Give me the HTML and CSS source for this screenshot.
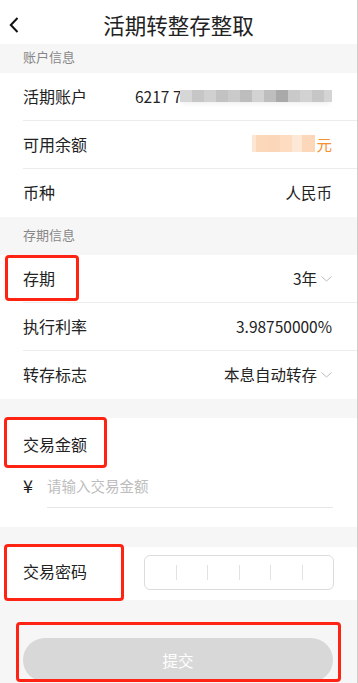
FILE: index.html
```html
<!DOCTYPE html>
<html lang="zh-CN">
<head>
  <meta charset="UTF-8">
  <meta name="viewport" content="width=device-width, initial-scale=1.0">
  <title>活期转整存整取</title>
  <link rel="stylesheet" href="styles.css">
</head>
<body>
  <div class="page">
    <header class="topbar">
      <svg class="back" width="10" height="16" viewBox="0 0 10 16">
        <path d="M8.5 1 L1.8 8 L8.5 15" fill="none" stroke="#111" stroke-width="2" />
      </svg>
      <h1>活期转整存整取</h1>
    </header>

    <div class="section-title first">账户信息</div>
    <div class="group">
      <div class="row">
        <span class="label">活期账户</span>
        <span class="account">6217 7<span class="blur-gray"></span></span>
      </div>
      <div class="row">
        <span class="label">可用余额</span>
        <span class="value orange"><span class="blur-orange"></span>元</span>
      </div>
      <div class="row">
        <span class="label">币种</span>
        <span class="value">人民币</span>
      </div>
    </div>

    <div class="section-title">存期信息</div>
    <div class="group">
      <div class="row">
        <span class="label">存期</span>
        <span class="value">3年<svg class="arrow" width="11" height="6" viewBox="0 0 11 6"><path d="M0.5 0.5 L5.5 5 L10.5 0.5" fill="none" stroke="#bbb" stroke-width="1" /></svg></span>
        <div class="mark mark-term"></div>
      </div>
      <div class="row">
        <span class="label">执行利率</span>
        <span class="value">3.98750000%</span>
      </div>
      <div class="row">
        <span class="label">转存标志</span>
        <span class="value">本息自动转存<svg class="arrow" width="11" height="6" viewBox="0 0 11 6"><path d="M0.5 0.5 L5.5 5 L10.5 0.5" fill="none" stroke="#bbb" stroke-width="1" /></svg></span>
      </div>
    </div>

    <div class="amount">
      <div class="amount-label">交易金额</div>
      <div class="amount-input">
        <span class="yen">¥</span>
        <input type="text" placeholder="请输入交易金额" />
      </div>
      <div class="mark mark-amount"></div>
    </div>

    <div class="password">
      <span class="label">交易密码</span>
      <div class="pwd-box">
        <span></span><span></span><span></span><span></span><span></span><span></span>
      </div>
      <div class="mark mark-pwd"></div>
    </div>

    <div class="submit-wrap">
      <button class="submit">提交</button>
      <div class="mark mark-submit"></div>
    </div>
  </div>
</body>
</html>
```

FILE: styles.css
```css
* {
  box-sizing: border-box;
}
body {
  margin: 0;
  background: #f6f6f6;
  font-family: "Noto Sans CJK SC", "Noto Sans", sans-serif;
  color: #222;
}
.page {
  width: 358px;
  min-height: 683px;
  overflow: hidden;
  border-right: 1px solid #d6cccc;
}
.topbar {
  height: 44px;
  background: #fff;
  position: relative;
  display: flex;
  align-items: center;
  justify-content: center;
}
.back {
  position: absolute;
  left: 9px;
  top: 17px;
}
.topbar h1 {
  margin: 0;
  padding-top: 5px;
  font-size: 21.5px;
  font-weight: normal;
  color: #222;
}
.section-title {
  height: 38px;
  line-height: 36px;
  padding-left: 23px;
  font-size: 13px;
  color: #888;
}
.section-title.first {
  height: 29px;
  line-height: 26px;
}
.group {
  background: #fff;
  padding-left: 23px;
}
.row {
  position: relative;
  height: 48px;
  display: flex;
  align-items: center;
  justify-content: space-between;
  padding-right: 25px;
  padding-bottom: 2px;
  border-bottom: 1px solid #ececec;
}
.row:last-child {
  border-bottom: none;
}
.label {
  font-size: 16px;
  color: #222;
}
.value {
  font-size: 15.5px;
  color: #222;
  display: flex;
  align-items: center;
}
.value.orange {
  color: #f39232;
}
.arrow {
  margin-left: 4px;
  margin-top: 2px;
}
.account {
  flex: 1;
  margin-left: 48px;
  font-size: 15.5px;
  display: flex;
  align-items: center;
  margin-right: -5px;
}
.blur-gray {
  display: inline-block;
  width: 152px;
  height: 12px;
  margin-left: -2px;
  margin-top: 1px;
  background: linear-gradient(90deg,
    #d6d6d6 0 12px, #c6c6c6 12px 24px, #d0d0d0 24px 36px, #c2c2c2 36px 48px,
    #cacaca 48px 60px, #bdbdbd 60px 72px, #d2d2d2 72px 84px, #bebebe 84px 96px,
    #a9a9a9 96px 108px, #c9c9c9 108px 120px, #d2d2d2 120px 132px, #c6c6c6 132px 144px,
    #d4d4d4 144px 152px);
  box-shadow: 0 4px 4px -2px rgba(200, 200, 200, 0.25);
}
.blur-orange {
  display: inline-block;
  width: 63px;
  height: 17px;
  margin-right: 1px;
  background: linear-gradient(90deg,
    #fde6d2 0 4px, #fcd8bb 4px 16px, #fcd6b8 16px 28px, #fddcc2 28px 40px,
    #fde8d6 40px 50px, #fcd7ba 50px 63px);
}
.mark {
  position: absolute;
  border: 3px solid #ff2314;
  border-radius: 4px;
  pointer-events: none;
}
.mark-term {
  left: -18px;
  top: 0;
  width: 74px;
  height: 46px;
}
.amount {
  position: relative;
  margin-top: 19px;
  background: #fff;
  height: 109px;
  padding: 0 25px 0 23px;
}
.amount-label {
  height: 56px;
  display: flex;
  align-items: center;
  padding-bottom: 5px;
  font-size: 16px;
}
.amount-input {
  display: flex;
  align-items: center;
  height: 22px;
}
.yen {
  width: 24px;
  font-size: 18px;
  line-height: 22px;
  color: #222;
}
.amount-input input {
  flex: 1;
  border: none;
  outline: none;
  padding: 0;
  height: 22px;
  font-family: inherit;
  font-size: 14.5px;
  color: #222;
  background: transparent;
}
.amount-input input::placeholder {
  color: #bdbdbd;
}
.amount::after {
  content: "";
  position: absolute;
  left: 47px;
  right: 24px;
  top: 89px;
  border-top: 1px solid #e6e6e6;
}
.mark-amount {
  left: 4px;
  top: -1px;
  width: 103px;
  height: 51px;
}
.password {
  position: relative;
  margin-top: 20px;
  height: 53px;
  background: #fff;
  display: flex;
  align-items: center;
  padding-left: 23px;
  padding-bottom: 3px;
}
.password .label {
  width: 121px;
  margin-bottom: 2px;
}
.pwd-box {
  width: 190px;
  height: 35px;
  border: 1px solid #dcdcdc;
  border-radius: 6px;
  display: flex;
  align-items: center;
}
.pwd-box span {
  flex: 1;
  height: 15px;
  border-right: 1px solid #e2e2e2;
}
.pwd-box span:last-child {
  border-right: none;
}
.mark-pwd {
  left: 4px;
  top: -3px;
  width: 120px;
  height: 57px;
}
.submit-wrap {
  position: relative;
  padding: 38px 24px 0 23px;
}
.submit {
  width: 100%;
  height: 44px;
  border: none;
  border-radius: 22px;
  background: #d8d8d8;
  color: #fff;
  font-family: inherit;
  font-size: 15.5px;
}
.mark-submit {
  left: 16px;
  top: 22px;
  width: 325px;
  height: 60px;
}
```
